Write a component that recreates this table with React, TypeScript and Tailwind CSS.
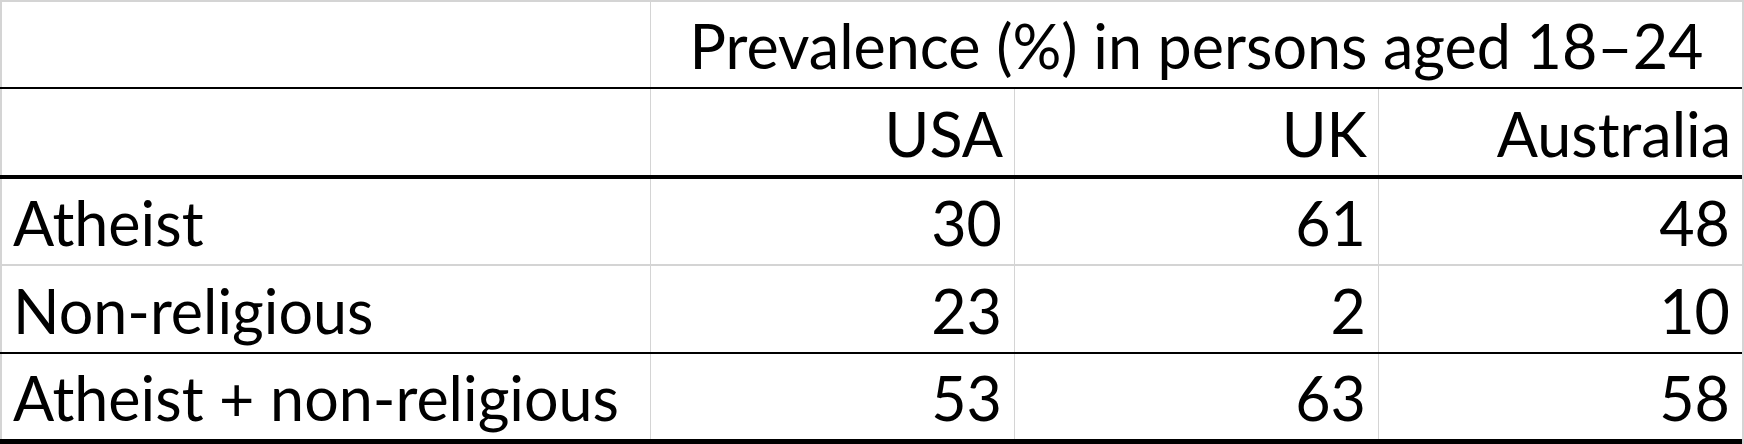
const rows = [
  { label: "Atheist", values: ["30", "61", "48"], line: "border-b-2 border-b-[#d4d4d4] h-[87px]" },
  { label: "Non-religious", values: ["23", "2", "10"], line: "border-b-2 border-b-black h-[88px]" },
  { label: "Atheist + non-religious", values: ["53", "63", "58"], line: "border-b-[5px] border-b-black h-[90px]" },
];

const App = () => {
  return (
    <div className="w-[1744px] h-[444px] bg-white overflow-hidden font-[Lato,sans-serif] text-black text-[61px] leading-none">
      <div className="w-[1744px] border-t-2 border-r-2 border-[#d4d4d4]">
        {/* title row */}
        <div className="flex h-[87px] border-b-2 border-b-black">
          <div className="w-[650px] border-l-2 border-[#d4d4d4]" />
          <div className="flex-1 flex items-end justify-center pb-[11px] border-l border-[#d4d4d4]">
            Prevalence (%) in persons aged 18–24
          </div>
        </div>

        {/* countries */}
        <div className="flex h-[90px] border-b-4 border-b-black">
          <div className="w-[650px] border-l-2 border-[#d4d4d4]" />
          <div className="w-[364px] flex items-end justify-end pr-[11px] pb-[11px] border-l border-[#d4d4d4]">USA</div>
          <div className="w-[364px] flex items-end justify-end pr-[11px] pb-[11px] border-l border-[#d4d4d4]">UK</div>
          <div className="flex-1 flex items-end justify-end pr-[11px] pb-[11px] border-l border-[#d4d4d4]">Australia</div>
        </div>

        {rows.map((r) => (
          <div key={r.label} className={`flex ${r.line}`}>
            <div className="w-[650px] flex items-end pl-[11px] pb-[11px] border-l-2 border-[#d4d4d4]">{r.label}</div>
            {r.values.map((v, i) => (
              <div
                key={i}
                className={`${i < 2 ? "w-[364px]" : "flex-1"} flex items-end justify-end pr-[12px] pb-[11px] border-l border-[#d4d4d4]`}
              >
                {v}
              </div>
            ))}
          </div>
        ))}
      </div>
    </div>
  );
};

export default App;
